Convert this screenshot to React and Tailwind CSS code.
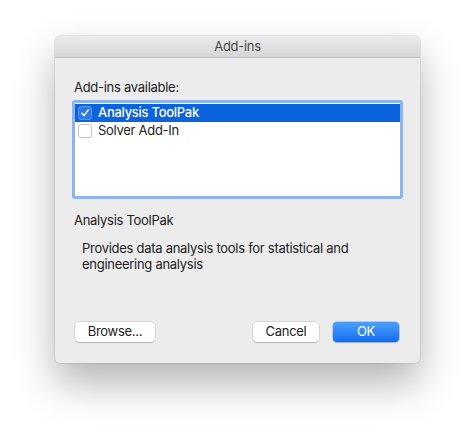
export default function App() {
  const font = { fontFamily: 'Inter, "Noto Sans", "Liberation Sans", sans-serif' };
  return (
    <div className="w-[474px] h-[434px] bg-white overflow-hidden tracking-[-0.28px]" style={font}>
      <div className="ml-[55px] mt-[36px] w-[365px] h-[327px] rounded-[5px] bg-[#ececec] shadow-[0_20px_40px_rgba(0,0,0,0.3),0_0_0_1px_rgba(0,0,0,0.07)] flex flex-col overflow-hidden">
        <div className="h-[22px] shrink-0 bg-gradient-to-b from-[#ebebeb] to-[#d6d6d6] border-b border-[#c4c4c4] flex items-center justify-center text-[13px] text-[#4a4a4a]">
          Add-ins
        </div>
        <div className="flex flex-col flex-1 pl-[17px] pr-[17px]">
          <div className="mt-[21px] h-[16px] leading-[16px] text-[13px] text-[#222] pl-[2px]">Add-ins available:</div>
          <div className="mt-[5px] w-[331px] h-[99px] rounded-[3px] bg-[#8db4ee] p-[3px]">
            <div className="w-full h-full bg-white pt-[1px]">
              <div className="h-[18px] bg-[#0b63dd] flex items-center pl-[3px] gap-[6px]">
                <div className="w-[14px] h-[14px] rounded-[3px] bg-[#2a78e6] border border-[#5c97ee] flex items-center justify-center">
                  <svg width="10" height="10" viewBox="0 0 10 10" fill="none">
                    <path d="M1.8 5.2 L4 7.6 L8.4 1.8" stroke="white" strokeWidth="1.5" strokeLinecap="round" strokeLinejoin="round" />
                  </svg>
                </div>
                <span className="text-[13px] text-white font-medium">Analysis ToolPak</span>
              </div>
              <div className="h-[18px] flex items-center pl-[3px] gap-[6px]">
                <div className="w-[14px] h-[14px] rounded-[3px] bg-white border border-[#c2c2c2]"></div>
                <span className="text-[13px] text-[#222]">Solver Add-In</span>
              </div>
            </div>
          </div>
          <div className="mt-[13px] h-[16px] leading-[16px] text-[13px] text-[#222] pl-[2px]">Analysis ToolPak</div>
          <div className="mt-[12px] pl-[10px] text-[13px] leading-[16px] text-[#222]">
            <div>Provides data analysis tools for statistical and</div>
            <div>engineering analysis</div>
          </div>
          <div className="mt-auto mb-[21px] flex items-center pl-[3px] pr-[4px]">
            <button className="w-[80px] h-[20px] rounded-[4px] bg-white text-[13px] text-[#222] shadow-[0_0_0_0.5px_rgba(0,0,0,0.18),0_1px_1px_rgba(0,0,0,0.15)]">Browse...</button>
            <div className="flex-1"></div>
            <button className="w-[66px] h-[20px] rounded-[4px] bg-white text-[13px] text-[#222] shadow-[0_0_0_0.5px_rgba(0,0,0,0.18),0_1px_1px_rgba(0,0,0,0.15)]">Cancel</button>
            <button className="ml-[14px] w-[66px] h-[20px] rounded-[4px] bg-gradient-to-b from-[#4da0f9] to-[#0f6cf3] text-[13px] text-white shadow-[0_0_0_0.5px_rgba(0,60,180,0.4),0_1px_1px_rgba(0,0,0,0.15)]">OK</button>
          </div>
        </div>
      </div>
    </div>
  );
}
